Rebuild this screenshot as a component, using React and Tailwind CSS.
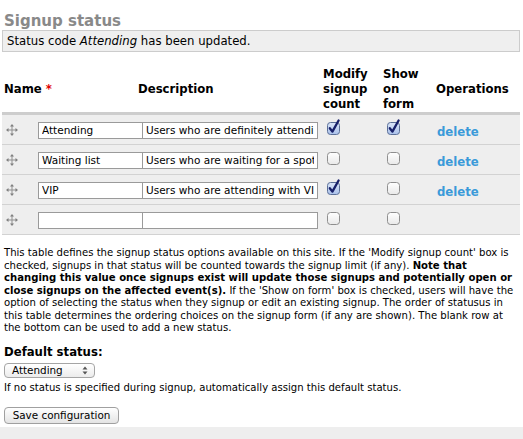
import React from "react";

function Handle() {
  return (
    <svg width="12" height="12" viewBox="0 0 12 12" className="block">
      <g stroke="#8f8f8f" strokeWidth="1" fill="none">
        <line x1="6" y1="1.5" x2="6" y2="10.5" />
        <line x1="1.5" y1="6" x2="10.5" y2="6" />
      </g>
      <g fill="#7f7f7f">
        <path d="M6 0 L8 2.5 L4 2.5 Z" />
        <path d="M6 12 L8 9.5 L4 9.5 Z" />
        <path d="M0 6 L2.5 4 L2.5 8 Z" />
        <path d="M12 6 L9.5 4 L9.5 8 Z" />
      </g>
    </svg>
  );
}

function Checkbox({ checked, id }) {
  return (
    <svg width="13" height="13" viewBox="0 0 13 13" className="block overflow-visible">
      <defs>
        <linearGradient id={"g" + id} x1="0" y1="0" x2="0" y2="1">
          {checked ? (
            <>
              <stop offset="0" stopColor="#dbe6f8" />
              <stop offset="1" stopColor="#a9c0ea" />
            </>
          ) : (
            <>
              <stop offset="0" stopColor="#ffffff" />
              <stop offset="1" stopColor="#e9e9e9" />
            </>
          )}
        </linearGradient>
      </defs>
      <rect
        x="0.5"
        y="0.5"
        width="12"
        height="12"
        rx="3"
        fill={"url(#g" + id + ")"}
        stroke={checked ? "#5b6f98" : "#8e8e8e"}
      />
      {checked && (
        <path
          d="M2.8 6.2 L5.4 9.6 L11.6 -1.5"
          stroke="#17206a"
          strokeWidth="2.3"
          fill="none"
          strokeLinecap="round"
          strokeLinejoin="round"
        />
      )}
    </svg>
  );
}

const rows = [
  { name: "Attending", desc: "Users who are definitely attending", c1: true, c2: true, del: true },
  { name: "Waiting list", desc: "Users who are waiting for a spot", c1: false, c2: false, del: true },
  { name: "VIP", desc: "Users who are attending with VIP status", c1: true, c2: false, del: true },
  { name: "", desc: "", c1: false, c2: false, del: false },
];

function Field({ value, className }) {
  return (
    <div
      className={
        "h-[17px] border border-[#9a9a9a] bg-white pl-[3px] pr-[3px] text-[10.5px] leading-[15px] text-black " +
        className
      }
    >
      <div className="overflow-hidden whitespace-nowrap">{value}</div>
    </div>
  );
}

export default function App() {
  return (
    <div className="font-['DejaVu_Sans',sans-serif] text-black bg-white w-[523px] h-[439px] overflow-hidden">
      <div className="pl-[2px] pr-[3px]">
        <div className="mt-[13px] pl-[2px] text-[15px] leading-[17px] font-bold text-[#898989]">
          Signup status
        </div>
        <div className="h-[22px] border border-[#cccccc] bg-[#efefef] px-[4px] text-[11.7px] leading-[20px]">
          Status code <em>Attending</em> has been updated.
        </div>

        <div className="mt-[15px] flex items-center h-[48px] border-b-[3px] border-[#cdcdcd] text-[11.7px] leading-[15px] font-bold">
          <div className="w-[136px] pl-[2px]">
            Name <span className="text-[#e00000]">*</span>
          </div>
          <div className="w-[185px]">Description</div>
          <div className="w-[60px]">
            Modify
            <br />
            signup
            <br />
            count
          </div>
          <div className="w-[53px]">
            Show
            <br />
            on
            <br />
            form
          </div>
          <div>Operations</div>
        </div>

        {rows.map((r, i) => (
          <div
            key={i}
            className="flex items-start h-[30px] border-b border-[#d2d2d2] bg-[#eeeeee] pt-[7px]"
          >
            <div className="w-[36px] pl-[4px] pt-[2px]">
              <Handle />
            </div>
            <Field value={r.name} className="w-[105px]" />
            <Field value={r.desc} className="w-[176px] -ml-[1px]" />
            <div className="w-[5px]" />
            <div className="w-[60px] pl-[4px] -mt-[0.5px]">
              <Checkbox checked={r.c1} id={"a" + i} />
            </div>
            <div className="w-[53px] pl-[4px] -mt-[0.5px]">
              <Checkbox checked={r.c2} id={"b" + i} />
            </div>
            <div className="pl-[1px] -mt-[3px]">
              {r.del && (
                <span className="text-[11.7px] leading-[15px] font-bold text-[#3a9ad9]">delete</span>
              )}
            </div>
          </div>
        ))}

        <p className="mt-[12px] pl-[2px] text-[10.1px] leading-[12.5px]">
          This table defines the signup status options available on this site. If the 'Modify signup count' box is
          checked, signups in that status will be counted towards the signup limit (if any).{" "}
          <strong>
            Note that changing this value once signups exist will update those signups and potentially open or
            close signups on the affected event(s).
          </strong>{" "}
          If the 'Show on form' box is checked, users will have the option of selecting the status when they signup
          or edit an existing signup. The order of statusus in this table determines the ordering choices on the
          signup form (if any are shown). The blank row at the bottom can be used to add a new status.
        </p>

        <div className="mt-[10px] pl-[2px] text-[11.7px] leading-[15px] font-bold">Default status:</div>

        <div className="mt-[3px] ml-[2px] flex items-center w-[91px] h-[15px] rounded-[4px] border border-[#a5a5a5] bg-gradient-to-b from-white to-[#ececec] pl-[7px] pr-[6px] text-[10.4px] leading-[13px]">
          <span className="flex-1">Attending</span>
          <svg width="6" height="9" viewBox="0 0 6 9" className="block">
            <path d="M3 0.5 L5.5 3.5 L0.5 3.5 Z" fill="#555" />
            <path d="M3 8.5 L5.5 5.5 L0.5 5.5 Z" fill="#555" />
          </svg>
        </div>

        <div className="mt-[4px] pl-[2px] text-[10.1px] leading-[12.5px]">
          If no status is specified during signup, automatically assign this default status.
        </div>

        <div className="mt-[12.5px] ml-[2px] flex items-center justify-center w-[115px] h-[17px] rounded-[4px] border border-[#a0a0a0] bg-gradient-to-b from-white to-[#e4e4e4] text-[10.4px] leading-[15px]">
          Save configuration
        </div>
      </div>
      <div className="mt-[3px] h-[12px] bg-[#eeeeee]" />
    </div>
  );
}
